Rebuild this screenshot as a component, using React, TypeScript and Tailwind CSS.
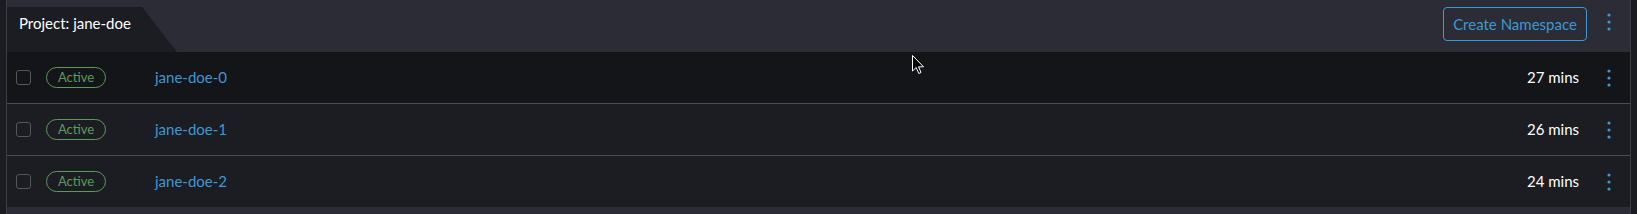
import React from "react";

const rows = [
  { name: "jane-doe-0", age: "27 mins", bg: "bg-[#141519]" },
  { name: "jane-doe-1", age: "26 mins", bg: "bg-[#1c1d22]" },
  { name: "jane-doe-2", age: "24 mins", bg: "bg-[#1c1d22]" },
];

function Kebab() {
  return (
    <svg width="4" height="18" viewBox="0 0 4 18" className="text-[#3d98d3]">
      <circle cx="2" cy="2" r="1.6" fill="currentColor" />
      <circle cx="2" cy="9" r="1.6" fill="currentColor" />
      <circle cx="2" cy="16" r="1.6" fill="currentColor" />
    </svg>
  );
}

export default function App() {
  return (
    <div className="relative flex h-[214px] w-[1637px] bg-[#1b1c21] pl-[6px] font-['Lato','Liberation_Sans',sans-serif]">
      <div className="flex w-[1625px] flex-col border-x border-[#3d3e45] bg-[#2b2c36]">
        {/* header */}
        <div className="flex h-[52px] items-end">
          <div className="h-[45px] w-[170px] bg-[#1c1d22] pl-[12px] pt-[6px] text-[15px] leading-5 text-white [clip-path:polygon(0_0,135px_0,100%_100%,0_100%)]">
            Project: jane-doe
          </div>
          <div className="ml-auto flex h-[52px] items-start pt-[7px]">
            <button className="h-[34px] w-[144px] rounded border border-[#3d98d3] text-[15px] text-[#3d98d3]">
              Create Namespace
            </button>
            <div className="flex w-[43px] justify-center pt-[6px]">
              <Kebab />
            </div>
          </div>
        </div>

        {/* rows */}
        {rows.map((r, i) => (
          <div
            key={r.name}
            className={`flex h-[51px] items-center ${r.bg} ${i < 2 ? "box-content border-b border-[#4b4c52]" : ""}`}
          >
            <div className="ml-[9px] h-[15px] w-[15px] rounded-[3px] border border-[#55565d]" />
            <span className="ml-[15px] flex h-[21px] w-[60px] items-center justify-center rounded-full border border-[#5d995d] text-[13px] text-[#5d995d]">
              Active
            </span>
            <span className="ml-[49px] text-[15px] text-[#3d98d3]">{r.name}</span>
            <span className="ml-auto mr-[8px] text-[15px] text-white">{r.age}</span>
            <div className="flex w-[43px] justify-center">
              <Kebab />
            </div>
          </div>
        ))}
      </div>

      {/* mouse pointer */}
      <svg
        width="13"
        height="20"
        viewBox="0 0 13 20"
        className="absolute left-[912px] top-[55px]"
      >
        <path
          d="M0.5 0.5 L0.5 16 L4.2 12.5 L6.8 18.5 L9 17.5 L6.5 11.8 L11.5 11.8 Z"
          fill="#000"
          stroke="#fff"
          strokeWidth="1"
        />
      </svg>
    </div>
  );
}
